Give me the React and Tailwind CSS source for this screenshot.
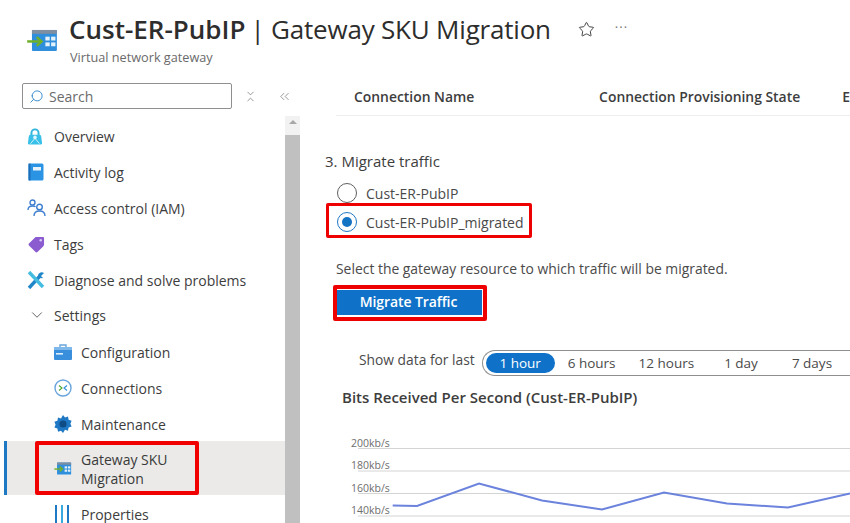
import React from "react";
import { Star, Search, ChevronDown, ChevronsLeft, ChevronsDownUp } from "lucide-react";

const GatewayIcon = ({ className }) => (
  <svg viewBox="0 0 32 24" className={className}>
    <rect x="5" y="1" width="26" height="22" rx="1" fill="#2f8fdc" />
    <rect x="5" y="1" width="26" height="4" fill="#7f8f9f" />
    <rect x="19" y="8" width="4.5" height="4" fill="#e4f2fc" />
    <rect x="25" y="8" width="4.5" height="4" fill="#e4f2fc" />
    <rect x="19" y="14" width="4.5" height="4" fill="#e4f2fc" />
    <rect x="25" y="14" width="4.5" height="4" fill="#e4f2fc" />
    <path d="M0 13h14" stroke="#6fb02a" strokeWidth="2.6" />
    <path d="M10 8.5l5 4.5-5 4.5" fill="none" stroke="#6fb02a" strokeWidth="2.6" />
  </svg>
);

const Overview = () => (
  <svg viewBox="0 0 18 20" className="w-[16px] h-[19px] -ml-[1px]">
    <path d="M5 9V6a4 4 0 0 1 8 0v3" fill="none" stroke="#2fb5dc" strokeWidth="2.2" />
    <path d="M2 10q0-2 2-2h10q2 0 2 2l1 8q0 1-2 1H3q-2 0-2-1z" fill="#38c0e8" />
    <circle cx="9" cy="11" r="2" fill="#dff6fc" />
    <path d="M4 18l5-6 5 6" fill="none" stroke="#dff6fc" strokeWidth="1" />
  </svg>
);
const Log = () => (
  <svg viewBox="0 0 16 18" className="w-[16px] h-[18px]">
    <rect x="0.5" y="0.5" width="15" height="17" rx="1.5" fill="#2b93e4" />
    <rect x="0.5" y="0.5" width="2" height="17" fill="#1a6fb8" />
    <rect x="5" y="4" width="8" height="3.5" fill="#e6f3fc" />
  </svg>
);
const Iam = () => (
  <svg viewBox="0 0 19 18" className="w-[19px] h-[18px] -ml-[1px]" fill="none" stroke="#3f7fd0" strokeWidth="1.4">
    <circle cx="5.5" cy="3.5" r="2.5" />
    <path d="M1 11q0-4 4.5-4 2 0 3 .8" />
    <circle cx="12.5" cy="8" r="2.8" />
    <path d="M7 17q0-5 5.5-5t5.5 5" />
  </svg>
);
const Tag = () => (
  <svg viewBox="0 0 18 18" className="w-[17px] h-[17px]">
    <path d="M8 1h8q1 0 1 1v7q0 1-1 2l-6 6q-1 1-2 0l-7-7q-1-1 0-2z" fill="#8a5cd0" />
    <circle cx="13.5" cy="4.5" r="1.3" fill="#d8c8f4" />
  </svg>
);
const Tools = () => (
  <svg viewBox="0 0 18 18" className="w-[18px] h-[18px] -ml-[1px]">
    <path d="M2 17L13 5" stroke="#1f86c8" strokeWidth="3.4" />
    <path d="M2 1l14 15" stroke="#44bce0" strokeWidth="3.4" />
    <path d="M11 4a4 4 0 0 1 6-2l-3 3 2 2a4 4 0 0 1-5-3z" fill="#1f86c8" />
  </svg>
);
const Config = () => (
  <svg viewBox="0 0 18 16" className="w-[18px] h-[16px]">
    <path d="M6 3V1h6v2" fill="none" stroke="#6aa5dc" strokeWidth="1.4" />
    <rect y="3" width="18" height="13" rx="1" fill="#3a8fdc" />
    <rect y="3" width="18" height="3" fill="#7fb8ea" />
    <rect x="2" y="9" width="7" height="1.6" fill="#dcefff" />
  </svg>
);
const Conn = () => (
  <svg viewBox="0 0 18 18" className="w-[18px] h-[18px]" fill="none">
    <circle cx="9" cy="9" r="8" stroke="#6aa5dc" strokeWidth="1.4" />
    <path d="M5 6.5L8 9l-3 2.5" stroke="#4ea82e" strokeWidth="1.1" />
    <path d="M13 6.5L10 9l3 2.5" stroke="#2f8fdc" strokeWidth="1.1" />
  </svg>
);
const Gear = () => (
  <svg viewBox="0 0 18 18" className="w-[18px] h-[18px]">
    <path d="M9 0l2 2.6 3-1 .6 3.2 3 .9-1.2 3 1.2 2.9-3 1-.6 3.1-3-1L9 18l-2-2.3-3 1-.6-3.1-3-1 1.2-2.9L.4 6.7l3-.9.6-3.2 3 1z" fill="#1f78c4" />
    <circle cx="9" cy="9" r="3.6" fill="#0f4c86" />
  </svg>
);
const Props = () => (
  <svg viewBox="0 0 16 18" className="w-[16px] h-[18px]">
    <rect x="1" y="0" width="2" height="18" fill="#1f78c4" />
    <rect x="7" y="0" width="2" height="18" fill="#38a8e0" />
    <rect x="13" y="0" width="2" height="18" fill="#1f78c4" />
  </svg>
);

const NavItem = ({ icon, label }) => (
  <div className="h-9 flex items-center pl-[24px]">
    <span className="w-[26px] flex justify-start shrink-0">{icon}</span>
    <span>{label}</span>
  </div>
);
const SubItem = ({ icon, label }) => (
  <div className="h-9 flex items-center pl-[50px]">
    <span className="w-[27px] flex justify-start shrink-0">{icon}</span>
    <span>{label}</span>
  </div>
);

const Sidebar = () => (
  <aside className="w-[300px] shrink-0 flex flex-col pl-1 h-full relative">
    <div className="pl-[18px] flex items-center h-[26px] mt-[1px] shrink-0">
      <div className="w-[210px] h-[26px] border border-[#8f8f8f] rounded-[2px] flex items-center pl-[6px] gap-[5px]">
        <Search size={15} color="#3f8fd0" className="-scale-x-100" strokeWidth={1.6} />
        <span className="text-[14px] text-[#6b6b6b]">Search</span>
      </div>
      <ChevronsDownUp size={13} color="#777" className="ml-[12px]" strokeWidth={1.4} />
      <ChevronsLeft size={15} color="#777" className="ml-[20px]" strokeWidth={1.2} />
    </div>
    <div className="flex flex-1 mt-[7px] min-h-0 overflow-hidden">
      <nav className="w-[281px] shrink-0 text-[14px] text-[#3d3d3d] pt-[2px]">
        <NavItem icon={<Overview />} label="Overview" />
        <NavItem icon={<Log />} label="Activity log" />
        <NavItem icon={<Iam />} label="Access control (IAM)" />
        <NavItem icon={<Tag />} label="Tags" />
        <NavItem icon={<Tools />} label="Diagnose and solve problems" />
        <div className="h-9 pb-[2px] flex items-center pl-[24px]">
          <span className="w-[26px]"><ChevronDown size={18} color="#555" strokeWidth={1.2} /></span>
          <span>Settings</span>
        </div>
        <SubItem icon={<Config />} label="Configuration" />
        <SubItem icon={<Conn />} label="Connections" />
        <SubItem icon={<Gear />} label="Maintenance" />
        <div className="h-[54px] bg-[#ebeae8] border-l-[3px] border-[#1f78c4] pl-[28px] -mt-[1px]">
          <div className="w-[164px] h-[54px] border-[4px] border-[#f00000] rounded-[2px] flex items-center pl-[15px] pt-[1px]">
            <GatewayIcon className="w-[18px] h-[13px] shrink-0" />
            <span className="ml-[9px] leading-[19px] font-medium text-[#3a3a3a]">Gateway SKU<br />Migration</span>
          </div>
        </div>
        <div className="mt-[1px]">
          <SubItem icon={<Props />} label="Properties" />
        </div>
      </nav>
      <div className="w-[15px] flex flex-col shrink-0">
        <div className="h-[19px] bg-[#f2f2f2] flex justify-center pt-[4px]">
          <div className="w-0 h-0 border-x-[4px] border-x-transparent border-b-[4px] border-b-[#a8a8a8]" />
        </div>
        <div className="flex-1 bg-[#c0c0c0]" />
      </div>
    </div>
  </aside>
);

const Chart = () => (
  <svg viewBox="0 0 510 92" className="w-[510px] h-[92px] block font-['Open_Sans',sans-serif]">
    {[[17.5, "200kb/s"], [40, "180kb/s"], [62.5, "160kb/s"], [85, "140kb/s"]].map(([y, t]) => (
      <g key={t}>
        <line x1="18" x2="510" y1={y} y2={y} stroke="#d4d4d4" strokeWidth="1" />
        <text x="11" y={y - 2} fontSize="10.5" fill="#6e6e6e">{t}</text>
      </g>
    ))}
    <polyline
      fill="none"
      stroke="#6b83dc"
      strokeWidth="2"
      points="52.7,74.5 77,75 139,52.5 202,69.5 262,78.5 324,61.5 387,72.5 448,76.5 510,62.5"
    />
  </svg>
);

export default function App() {
  return (
    <div className="w-[850px] h-[523px] overflow-hidden bg-white flex flex-col font-['Open_Sans','Noto_Sans',sans-serif] text-[#323130]">
      <header className="h-[82px] shrink-0 flex pl-[26px] pt-[12px]">
        <GatewayIcon className="w-[33px] h-[23px] mt-[17px]" />
        <div className="ml-[10px]">
          <div className="flex items-center h-[34px] text-[26px] text-[#2d2d2d] whitespace-nowrap">
            <span className="font-semibold">Cust-ER-PubIP</span>
            <span className="ml-[5px] tracking-[-0.2px]">| Gateway SKU Migration</span>
            <Star size={17} color="#444" strokeWidth={1.4} className="ml-[27px]" />
            <span className="ml-[20px] text-[13px] text-[#777] tracking-[1px] -mt-[2px]">···</span>
          </div>
          <div className="text-[12.7px] text-[#6a6a6a] mt-[2px] ml-[1px]">Virtual network gateway</div>
        </div>
      </header>
      <div className="flex flex-1 min-h-0">
        <Sidebar />
        <main className="flex-1 min-w-0 overflow-hidden">
          <div className="ml-[36px] h-[34px] border-b border-[#eeeeee] flex items-start text-[13.9px] font-semibold text-[#3d3d3d] whitespace-nowrap pt-[5px] pl-[18px]">
            <span className="w-[247px]">Connection Name</span>
            <span className="w-[245px]">Connection Provisioning State</span>
            <span>E</span>
          </div>
          <div className="pl-[25px] pt-[35px] text-[15px] text-[#3d3d3d] leading-[20px]">3. Migrate traffic</div>
          <div className="ml-[26px] mt-[10px]">
            <div className="flex items-center h-[24px] pl-[11px] gap-[9px] text-[14px] text-[#4a4a4a]">
              <span className="w-[20px] h-[20px] rounded-full border-[1.5px] border-[#5f5f5f]" />
              <span>Cust-ER-PubIP</span>
            </div>
            <div className="w-[206px] h-[35px] -mt-[2px] border-[3px] border-[#ee0000] rounded-[2px] flex items-center pl-[8px] pt-[3px] gap-[9px] text-[14px] text-[#4a4a4a] whitespace-nowrap">
              <span className="w-[20px] h-[20px] rounded-full border-[1.5px] border-[#1f78c4] flex items-center justify-center">
                <span className="w-[10px] h-[10px] rounded-full bg-[#1474c4]" />
              </span>
              <span>Cust-ER-PubIP_migrated</span>
            </div>
          </div>
          <div className="pl-[36px] mt-[21px] text-[13.9px] leading-[20px] text-[#4a4a4a] whitespace-nowrap">
            Select the gateway resource to which traffic will be migrated.
          </div>
          <div className="ml-[33px] mt-[6px] w-[154px] h-[36px] border-[4px] border-[#ee0000] rounded-[2px] pt-px">
            <div className="h-[25px] w-[145px] bg-[#0f72c8] flex items-center justify-center pb-[3px] pr-[2px] text-[14px] tracking-[-0.1px] font-semibold text-white">
              Migrate Traffic
            </div>
          </div>
          <div className="flex mt-[29px] pl-[59px]">
            <span className="text-[13.8px] text-[#4a4a4a] leading-[20px] whitespace-nowrap">Show data for last</span>
            <div className="ml-[7px] h-[26px] flex-1 rounded-l-[13px] border-y border-l border-[#8f8f8f] pl-[3px] flex items-center text-[13.5px] text-[#4a4a4a] whitespace-nowrap">
              <span className="w-[69px] h-[20px] rounded-[10px] bg-[#0f72c8] text-white flex items-center justify-center">1 hour</span>
              <span className="ml-[13px]">6 hours</span>
              <span className="ml-[23px]">12 hours</span>
              <span className="ml-[30px]">1 day</span>
              <span className="ml-[34px]">7 days</span>
            </div>
          </div>
          <div className="pl-[42px] mt-[11px] text-[15px] font-semibold text-[#3d3d3d] leading-[20px] whitespace-nowrap">
            Bits Received Per Second (Cust-ER-PubIP)
          </div>
          <div className="ml-[40px] mt-[24px]">
            <Chart />
          </div>
        </main>
      </div>
    </div>
  );
}
